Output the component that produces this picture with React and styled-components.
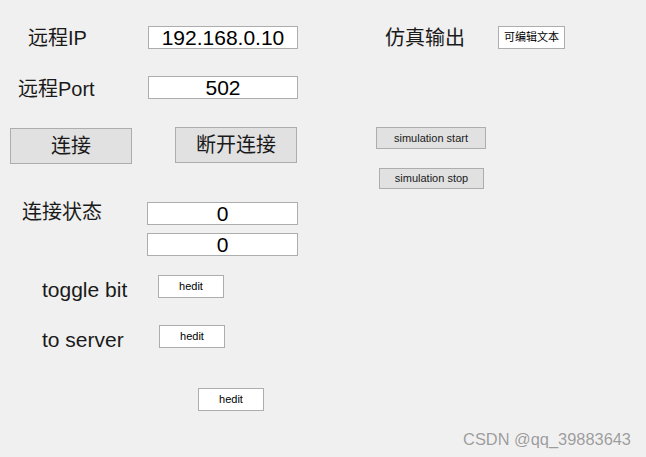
import React from 'react';
import styled, { createGlobalStyle } from 'styled-components';

const GlobalStyle = createGlobalStyle`
  html, body {
    margin: 0;
    padding: 0;
    background-color: #f0f0f0;
  }
  body {
    font-family: "Liberation Sans", "Noto Sans CJK SC", sans-serif;
  }
`;

const Figure = styled.div`
  position: relative;
  width: 646px;
  height: 457px;
  display: flex;
  overflow: hidden;
  background-color: #f0f0f0;
  color: #111;
`;

const LeftPane = styled.div`
  width: 320px;
  display: flex;
  flex-direction: column;
`;

const RightPane = styled.div`
  flex: 1;
  display: flex;
  flex-direction: column;
`;

const Row = styled.div`
  display: flex;
  align-items: ${(p) => p.$align || 'center'};
  margin-top: ${(p) => p.$mt}px;
  padding-left: ${(p) => p.$pl || 0}px;
  height: ${(p) => (p.$h ? `${p.$h}px` : 'auto')};
`;

// $drop pushes the text down inside a centred row (padding counts double)
const Label = styled.div`
  box-sizing: border-box;
  width: ${(p) => p.$w}px;
  padding-left: ${(p) => p.$pl}px;
  padding-top: ${(p) => (p.$drop || 0) * 2}px;
  font-size: ${(p) => p.$size || 20}px;
  line-height: 1;
  white-space: nowrap;
  color: #1a1a1a;
`;

const EditBox = styled.div`
  box-sizing: border-box;
  width: ${(p) => p.$w}px;
  height: ${(p) => p.$h || 23}px;
  background-color: #fff;
  border: 1px solid #adadad;
  display: flex;
  align-items: center;
  justify-content: center;
  font-size: ${(p) => p.$size || 21}px;
  line-height: 1;
  color: #000;
  white-space: nowrap;
`;

const PushButton = styled.div`
  box-sizing: border-box;
  width: ${(p) => p.$w}px;
  height: ${(p) => p.$h}px;
  margin-left: ${(p) => p.$ml || 0}px;
  margin-top: ${(p) => p.$mt || 0}px;
  background-color: #e1e1e1;
  border: 1px solid #adadad;
  display: flex;
  align-items: center;
  justify-content: center;
  font-size: ${(p) => p.$size}px;
  line-height: 1;
  color: #1a1a1a;
  white-space: nowrap;
`;

const StatusStack = styled.div`
  display: flex;
  flex-direction: column;
  gap: 8px;
`;

const Watermark = styled.div`
  position: absolute;
  right: 15px;
  bottom: 8px;
  font-size: 16.4px;
  color: #9c9c9c;
  text-shadow: 0 0 1px #fff;
`;

export default function App() {
  return (
    <>
      <GlobalStyle />
      <Figure>
        <LeftPane>
          <Row $mt={26} $h={23}>
            <Label $w={148} $pl={28}>远程IP</Label>
            <EditBox $w={150}>192.168.0.10</EditBox>
          </Row>
          <Row $mt={27} $h={23}>
            <Label $w={148} $pl={18} $drop={1}>远程Port</Label>
            <EditBox $w={150}>502</EditBox>
          </Row>
          <Row $mt={28} $h={36} $align="flex-start" $pl={10}>
            <PushButton $w={122} $h={36} $mt={1} $size={20}>连接</PushButton>
            <PushButton $w={122} $h={36} $ml={43} $size={20}>断开连接</PushButton>
          </Row>
          <Row $mt={39} $align="flex-start">
            <Label $w={147} $pl={22}>连接状态</Label>
            <StatusStack>
              <EditBox $w={151}>0</EditBox>
              <EditBox $w={151}>0</EditBox>
            </StatusStack>
          </Row>
          <Row $mt={19} $h={23}>
            <Label $w={158} $pl={42} $size={21} $drop={3}>toggle bit</Label>
            <EditBox $w={66} $size={11}>hedit</EditBox>
          </Row>
          <Row $mt={27} $h={23}>
            <Label $w={159} $pl={42} $size={21} $drop={3}>to server</Label>
            <EditBox $w={66} $size={11}>hedit</EditBox>
          </Row>
          <Row $mt={40} $h={23} $pl={198}>
            <EditBox $w={66} $size={11}>hedit</EditBox>
          </Row>
        </LeftPane>
        <RightPane>
          <Row $mt={26} $h={23}>
            <Label $w={178} $pl={65}>仿真输出</Label>
            <EditBox $w={67} $size={11}>可编辑文本</EditBox>
          </Row>
          <Row $mt={78}>
            <PushButton $w={110} $h={22} $ml={56} $size={11}>simulation start</PushButton>
          </Row>
          <Row $mt={19}>
            <PushButton $w={105} $h={21} $ml={59} $size={11}>simulation stop</PushButton>
          </Row>
        </RightPane>
        <Watermark>CSDN @qq_39883643</Watermark>
      </Figure>
    </>
  );
}
